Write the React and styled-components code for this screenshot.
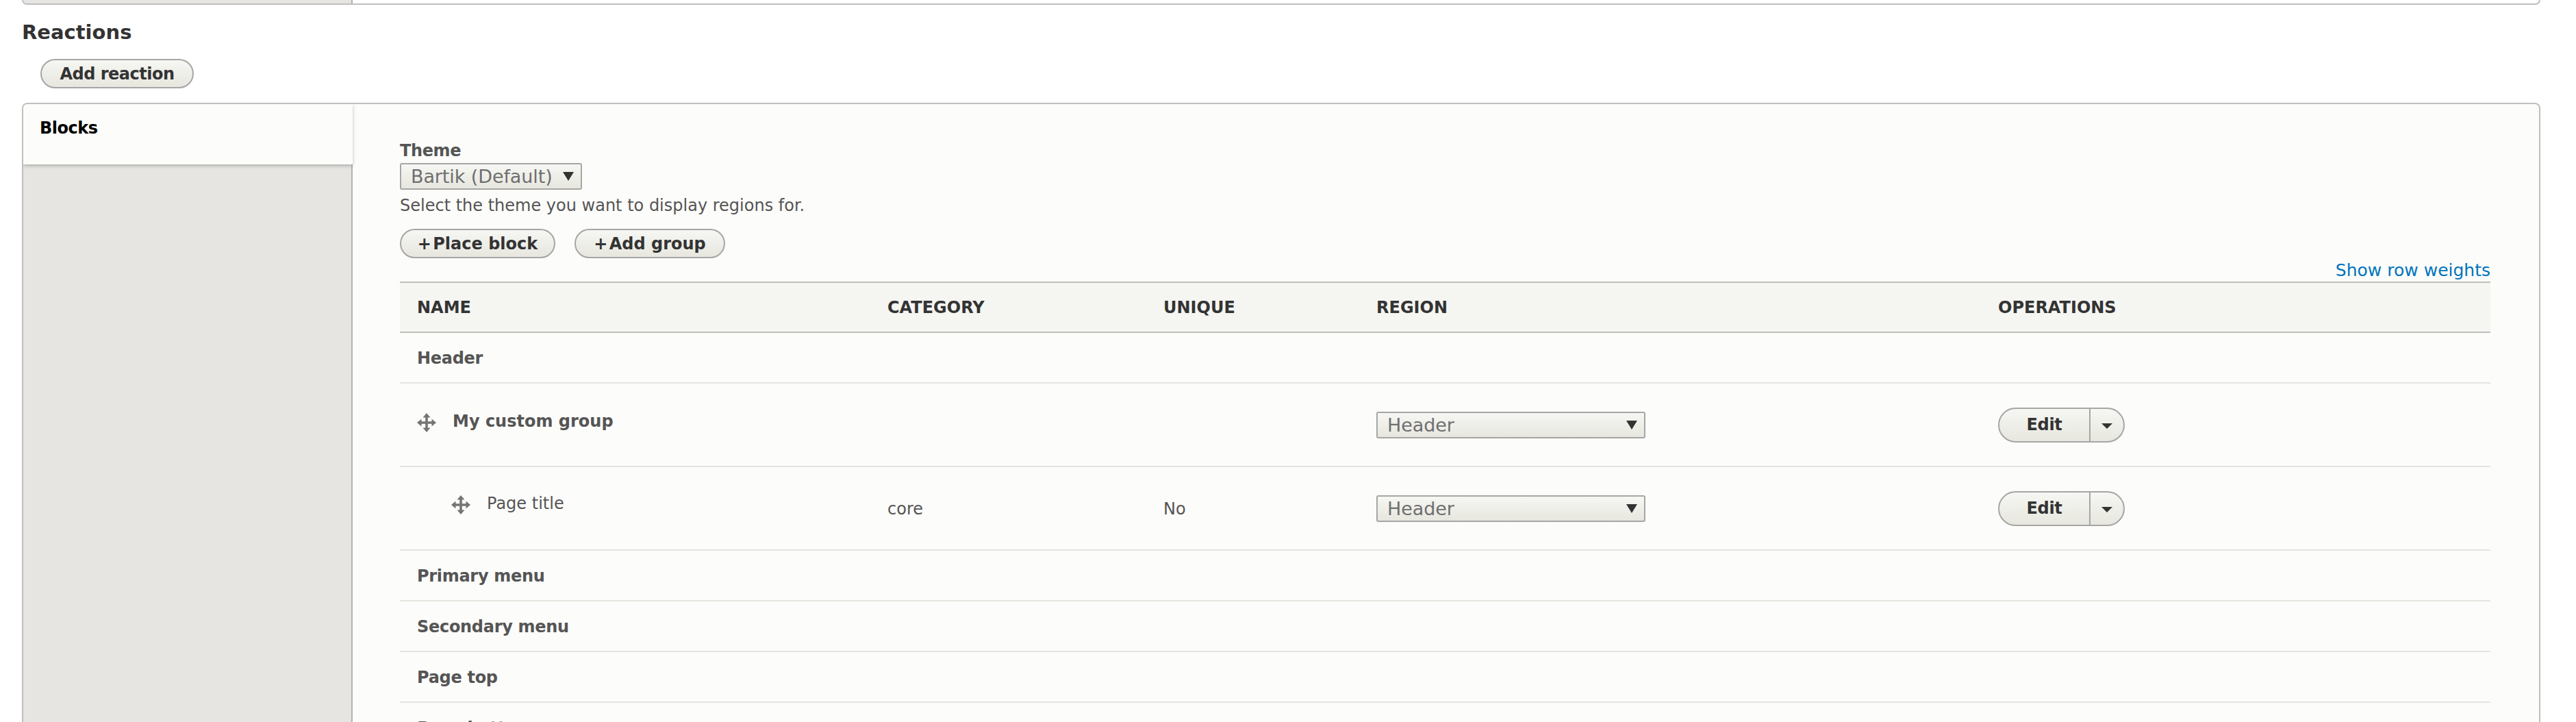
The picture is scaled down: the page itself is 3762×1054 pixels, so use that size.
import React from "react";
import styled, { createGlobalStyle } from "styled-components";

const GlobalStyle = createGlobalStyle`
    html, body {
        margin: 0;
        padding: 0;
        background: #fff;
    }
    body {
        height: 1054px;
        overflow: hidden;
        font-family: "DejaVu Sans", "Liberation Sans", sans-serif;
        color: #333;
    }
`;

const Page = styled.div`
    height: 1054px;
    overflow: hidden;
    padding: 0 52px 0 32px;
`;

const PrevPanel = styled.div`
    display: flex;
    height: 7px;
    box-sizing: border-box;
    border: 2px solid #bfbfbf;
    border-top: none;
    border-radius: 0 0 8px 8px;
    overflow: hidden;
`;

const PrevSidebar = styled.div`
    width: 479px;
    background: #e6e5e1;
    border-right: 2px solid #b3b3b3;
`;

const Title = styled.h2`
    margin: 24px 0 0;
    font-size: 29px;
    line-height: 32px;
    font-weight: 700;
    color: #333;
    letter-spacing: 0;
`;

const PillButton = styled.button`
    display: inline-flex;
    align-items: center;
    justify-content: center;
    box-sizing: border-box;
    height: 43px;
    width: ${(p) => p.$width}px;
    padding: 0;
    border: 2px solid #a6a6a6;
    border-radius: 22px;
    background: linear-gradient(#f6f6f3, #e7e7df);
    font-family: inherit;
    font-size: 24px;
    font-weight: 700;
    color: #333;
    letter-spacing: ${(p) => p.$spacing || "-0.5px"};
`;

const AddReactionRow = styled.div`
    margin: 23px 0 0 27px;
    height: 43px;
    display: flex;
`;

const Panel = styled.div`
    display: flex;
    margin-top: 21px;
    height: 920px;
    border: 2px solid #bfbfbf;
    border-bottom: none;
    border-radius: 8px 8px 0 0;
    background: #fcfcfa;
    overflow: hidden;
`;

const Sidebar = styled.div`
    flex: 0 0 479px;
    background: #e6e5e1;
    border-right: 2px solid #b3b3b3;
`;

const ActiveTab = styled.div`
    height: 88px;
    box-sizing: border-box;
    padding: 20px 0 0 24px;
    margin-right: -2px;
    background: #fcfcfa;
    box-shadow: 0 2px 5px rgba(0, 0, 0, 0.25);
    font-size: 24px;
    line-height: 30px;
    font-weight: 700;
    color: #000;
    letter-spacing: -0.5px;
`;

const Content = styled.div`
    flex: 1;
    min-width: 0;
    padding: 53px 71px 0 69px;
`;

const Label = styled.label`
    display: block;
    font-size: 24px;
    line-height: 30px;
    font-weight: 700;
    color: #555;
    letter-spacing: -0.4px;
    height: 33px;
`;

const SelectBox = styled.div`
    position: relative;
    box-sizing: border-box;
    width: ${(p) => p.$width}px;
    height: 39px;
    padding-left: 14px;
    border: 2px solid #a6a6a6;
    border-radius: 3px;
    background: linear-gradient(#f6f6f3, #e7e7df);
    font-size: 27px;
    line-height: 35px;
    color: #6f6f6f;
    letter-spacing: -0.1px;
`;

const SelectCaret = styled.span`
    position: absolute;
    right: 10px;
    top: 11px;
    width: 0;
    height: 0;
    border-left: 8px solid transparent;
    border-right: 8px solid transparent;
    border-top: 13px solid #333;
`;

const Description = styled.div`
    margin-top: 8px;
    font-size: 24px;
    line-height: 30px;
    color: #555;
`;

const ActionRow = styled.div`
    display: flex;
    gap: 28px;
    margin-top: 19px;
    height: 43px;
`;

const WeightsRow = styled.div`
    display: flex;
    justify-content: flex-end;
    height: 34px;
    line-height: 36px;
`;

const WeightsLink = styled.a`
    font-size: 25px;
    color: #0074bd;
    text-decoration: none;
`;

const Table = styled.table`
    width: 100%;
    table-layout: fixed;
    border-collapse: collapse;
    border-top: 2px solid #bebfb9;
`;

const HeadCell = styled.th`
    box-sizing: border-box;
    height: 73px;
    padding: 1px 0 0 25px;
    background: #f5f5f2;
    border-bottom: 2px solid #bebfb9;
    text-align: left;
    font-size: 24px;
    font-weight: 700;
    color: #333;
    text-transform: uppercase;
    letter-spacing: 0;
    width: ${(p) => (p.$width ? `${p.$width}px` : "auto")};
`;

const Row = styled.tr`
    border-bottom: 2px solid #e6e4df;
`;

const Cell = styled.td`
    box-sizing: border-box;
    height: ${(p) => (p.$tall ? 122 : 74)}px;
    padding: 1px 0 0 25px;
    font-size: 24px;
    color: #555;
`;

const RegionCell = styled(Cell)`
    font-weight: 700;
    letter-spacing: -0.3px;
`;

const NameLine = styled.div`
    display: flex;
    align-items: center;
    gap: 24px;
    margin: ${(p) => -p.$lift}px 0 0 ${(p) => p.$indent || 0}px;
    font-weight: ${(p) => (p.$bold ? 700 : 400)};
`;

const DragHandle = styled.svg`
    flex: none;
    width: 28px;
    height: 28px;
    margin-top: 4px;
    fill: #757575;
`;

const SplitButton = styled.div`
    display: flex;
    box-sizing: border-box;
    width: 185px;
    height: 51px;
    border: 2px solid #a6a6a6;
    border-radius: 26px;
    background: linear-gradient(#f6f6f3, #e7e7df);
`;

const SplitLabel = styled.span`
    flex: 0 0 131px;
    text-align: center;
    font-size: 24px;
    line-height: 47px;
    font-weight: 700;
    color: #333;
    border-right: 2px solid #a6a6a6;
    letter-spacing: -0.3px;
`;

const SplitToggle = styled.span`
    flex: 1;
    display: flex;
    align-items: center;
    justify-content: center;
    &::after {
        content: "";
        width: 0;
        height: 0;
        margin-top: 3px;
        border-left: 8px solid transparent;
        border-right: 8px solid transparent;
        border-top: 8px solid #333;
    }
`;

const MoveIcon = () => (
    <DragHandle viewBox="0 0 28 28">
        <path d="M14 0l5.500 6.500h-3.700v5.700h5.700V8.500L28 14l-6.500 5.500v-3.700h-5.700v5.700h3.700L14 28l-5.500-6.500h3.700v-5.700H6.500v3.700L0 14l6.500-5.500v3.700h5.700V6.500H8.500z" />
    </DragHandle>
);

const RegionSelect = () => (
    <SelectBox $width={393}>
        Header
        <SelectCaret />
    </SelectBox>
);

const Operations = () => (
    <SplitButton>
        <SplitLabel>Edit</SplitLabel>
        <SplitToggle />
    </SplitButton>
);

const emptyRegions = ["Primary menu", "Secondary menu", "Page top", "Page bottom"];

const App = () => (
    <Page>
        <GlobalStyle />
        <PrevPanel>
            <PrevSidebar />
        </PrevPanel>
        <Title>Reactions</Title>
        <AddReactionRow>
            <PillButton $width={224}>Add reaction</PillButton>
        </AddReactionRow>
        <Panel>
            <Sidebar>
                <ActiveTab>Blocks</ActiveTab>
            </Sidebar>
            <Content>
                <Label>Theme</Label>
                <SelectBox $width={266}>
                    Bartik (Default)
                    <SelectCaret />
                </SelectBox>
                <Description>Select the theme you want to display regions for.</Description>
                <ActionRow>
                    <PillButton $width={227} $spacing="0">+{"\u200a"}Place block</PillButton>
                    <PillButton $width={220} $spacing="0">+{"\u200a"}Add group</PillButton>
                </ActionRow>
                <WeightsRow>
                    <WeightsLink>Show row weights</WeightsLink>
                </WeightsRow>
                <Table>
                    <thead>
                        <tr>
                            <HeadCell $width={687}>Name</HeadCell>
                            <HeadCell $width={403}>Category</HeadCell>
                            <HeadCell $width={311}>Unique</HeadCell>
                            <HeadCell $width={908}>Region</HeadCell>
                            <HeadCell>Operations</HeadCell>
                        </tr>
                    </thead>
                    <tbody>
                        <Row>
                            <RegionCell colSpan={5}>Header</RegionCell>
                        </Row>
                        <Row>
                            <Cell $tall>
                                <NameLine $bold $lift={11}>
                                    <MoveIcon />
                                    My custom group
                                </NameLine>
                            </Cell>
                            <Cell $tall />
                            <Cell $tall />
                            <Cell $tall>
                                <RegionSelect />
                            </Cell>
                            <Cell $tall>
                                <Operations />
                            </Cell>
                        </Row>
                        <Row>
                            <Cell $tall>
                                <NameLine $indent={50} $lift={15}>
                                    <MoveIcon />
                                    Page title
                                </NameLine>
                            </Cell>
                            <Cell $tall>core</Cell>
                            <Cell $tall>No</Cell>
                            <Cell $tall>
                                <RegionSelect />
                            </Cell>
                            <Cell $tall>
                                <Operations />
                            </Cell>
                        </Row>
                        {emptyRegions.map((name) => (
                            <Row key={name}>
                                <RegionCell colSpan={5}>{name}</RegionCell>
                            </Row>
                        ))}
                    </tbody>
                </Table>
            </Content>
        </Panel>
    </Page>
);

export default App;
